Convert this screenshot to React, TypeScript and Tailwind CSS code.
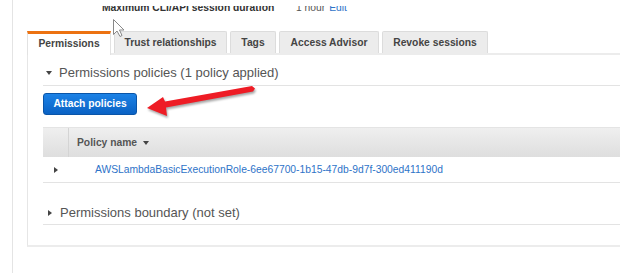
const tabs = [
  { label: "Permissions", width: "w-[84px]", active: true },
  { label: "Trust relationships", width: "w-[113px]", active: false },
  { label: "Tags", width: "w-[46px]", active: false },
  { label: "Access Advisor", width: "w-[100px]", active: false },
  { label: "Revoke sessions", width: "w-[106px]", active: false },
];

const CaretDown = () => (
  <svg width="6" height="4" viewBox="0 0 6 4" className="shrink-0">
    <path d="M0 0 L6 0 L3 4 Z" fill="#444" />
  </svg>
);

const CaretRight = () => (
  <svg width="4" height="6" viewBox="0 0 4 6" className="shrink-0">
    <path d="M0 0 L4 3 L0 6 Z" fill="#444" />
  </svg>
);

const App = () => {
  return (
    <div className="relative h-[273px] w-[640px] overflow-hidden bg-white font-['Liberation_Sans',Arial,sans-serif] text-[#444]">
      <div className="flex h-full">
        <div className="w-[13px] shrink-0 border-r border-[#e4e4e4]" />

        <div className="flex-1 pl-[14px] pr-[20px]">
          {/* summary row, cut by the top edge of the screenshot */}
          <div className="pt-[6px]">
            <div className="h-[7px] overflow-hidden">
              <div className="-mt-[4px] flex text-[10.3px] leading-[12px]">
                <span className="ml-[75px] w-[194px] font-bold text-[#333]">
                  Maximum CLI/API session duration
                </span>
                <span className="text-[#555]">1 hour</span>
                <span className="ml-[4px] text-[#2e73c8]">Edit</span>
              </div>
            </div>
          </div>

          {/* tabs */}
          <div className="mt-[18px] flex h-[24px] items-end gap-[3px] border-b-2 border-[#ececec]">
            {tabs.map((tab) =>
              tab.active ? (
                <div
                  key={tab.label}
                  className={`${tab.width} relative -mb-[2px] flex h-[24px] items-center justify-center border-t-[3px] border-x border-[#ec7211] border-x-[#e2e2e2] bg-white pb-[2px] text-[10.3px] font-bold`}
                >
                  {tab.label}
                </div>
              ) : (
                <div
                  key={tab.label}
                  className={`${tab.width} flex h-[22px] items-center justify-center rounded-t-[2px] border border-b-0 border-[#dcdcdc] bg-[#ececec] pt-[1px] text-[10.3px] font-bold`}
                >
                  {tab.label}
                </div>
              )
            )}
          </div>

          {/* panel */}
          <div className="border-b-2 border-l border-[#ececec] border-l-[#e6e6e6] pb-[20px] pl-[15px]">
            <div className="flex items-center border-b border-[#e3e3e3] pb-[5px] pt-[10px] text-[13px] leading-[15px] text-[#555]">
              <span className="ml-[3px] mr-[7px]">
                <CaretDown />
              </span>
              Permissions policies (1 policy applied)
            </div>

            <button className="mt-[7px] flex h-[22px] w-[94px] items-center justify-center rounded-[3px] border border-[#0a55a8] bg-gradient-to-b from-[#1c82e6] to-[#0a62c4] text-[10.3px] font-bold text-white">
              Attach policies
            </button>

            <div className="mt-[12px]">
              <div className="flex h-[30px] border-t border-[#e4e4e4] bg-gradient-to-b from-[#efefef] to-[#dedede]">
                <div className="w-[26px] border-r border-[#d4d4d4]" />
                <div className="flex items-center gap-[6px] pl-[8px] text-[10.3px] font-bold text-[#555]">
                  Policy name
                  <CaretDown />
                </div>
              </div>
              <div className="flex h-[26px] items-center border-b border-[#e3e3e3]">
                <span className="ml-[11px]">
                  <CaretRight />
                </span>
                <span className="ml-[37px] text-[10.3px] text-[#2e73c8]">
                  AWSLambdaBasicExecutionRole-6ee67700-1b15-47db-9d7f-300ed411190d
                </span>
              </div>
            </div>

            <div className="flex items-center border-b border-[#e3e3e3] pb-[4px] pt-[22px] text-[13px] leading-[15px] text-[#555]">
              <span className="ml-[5px] mr-[8px]">
                <CaretRight />
              </span>
              Permissions boundary (not set)
            </div>
          </div>
        </div>
      </div>

      {/* red annotation arrow */}
      <svg
        className="pointer-events-none absolute left-0 top-0 drop-shadow-[1px_2px_1px_rgba(0,0,0,0.35)]"
        width="640"
        height="273"
        viewBox="0 0 640 273"
      >
        <path
          d="M147 108 L163 97 L165 101.5 L252 86 L255 88.5 L253 91.5 L166 107.5 L167 116 Z"
          fill="#ee1c25"
        />
      </svg>

      {/* mouse cursor */}
      <svg
        className="pointer-events-none absolute left-[113px] top-[19px]"
        width="13"
        height="19"
        viewBox="0 0 13 19"
      >
        <path
          d="M0.5 0.5 L0.5 15.5 L4 12 L7 17.5 L9 16.5 L6.5 11 L11 11 Z"
          fill="#fff"
          stroke="#888"
          strokeWidth="1"
        />
      </svg>
    </div>
  );
};

export default App;
